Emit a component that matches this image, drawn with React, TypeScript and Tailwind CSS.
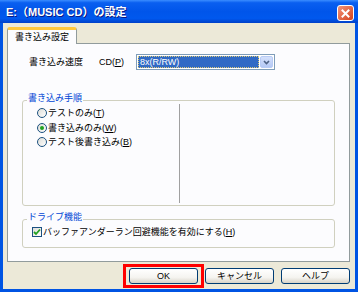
import React from "react";

function Radio({ checked }: { checked?: boolean }) {
  return (
    <div className="w-[10px] h-[10px] shrink-0 rounded-full border border-[#1C5180] bg-[linear-gradient(135deg,#DCDCD7,#FFFFFF)] flex items-center justify-center">
      {checked && <div className="w-[4px] h-[4px] rounded-full bg-[#21A121]" />}
    </div>
  );
}

function Btn({ children }: { children: React.ReactNode }) {
  return (
    <div className="w-[69px] h-[16px] rounded-[3px] border border-[#003C74] bg-[linear-gradient(to_bottom,#FFFFFF_0%,#F5F4F0_60%,#D8D3C8_100%)] flex items-center justify-center text-[9px] leading-[12px]">
      {children}
    </div>
  );
}

export default function App() {
  return (
    <div className="w-[358px] h-[292px] flex flex-col bg-[#0054E3] font-['Liberation_Sans','Noto_Sans_CJK_JP',sans-serif] text-black">
      <div className="h-[23px] shrink-0 flex items-start bg-[linear-gradient(to_bottom,#3A8DFF_0%,#0A5FF0_12%,#0055EA_50%,#0058EE_80%,#0040C8_100%)]">
        <div className="flex-1 pl-[6px] pt-[5px] text-[11px] leading-[14px] font-bold text-white [text-shadow:1px_1px_0_#0A1883]">
          E:（MUSIC CD）の設定
        </div>
        <div className="mt-[5px] mr-[4px] w-[17px] h-[16px] rounded-[3px] border border-white bg-[linear-gradient(135deg,#F2947A,#D5421C)] flex items-center justify-center">
          <svg width="9" height="9" viewBox="0 0 9 9">
            <path d="M1.5 1.5L7.5 7.5M7.5 1.5L1.5 7.5" stroke="white" strokeWidth="2" strokeLinecap="square" />
          </svg>
        </div>
      </div>
      <div className="flex-1 mx-[3px] mb-[3px] bg-[#ECE9D8] flex flex-col pl-[4px] pr-[5px] pt-[4px] pb-[5px]">
        <div className="flex h-[16px] shrink-0">
          <div className="relative z-10 w-[70px] h-[17px] rounded-t-[3px] border-x border-[#919B9C] border-t-[3px] border-t-[#FFC83C] bg-[#FCFCFE] flex items-center justify-center text-[9px] leading-[12px]">
            書き込み設定
          </div>
        </div>
        <div className="flex-1 border border-[#919B9C] bg-[#FCFCFE] flex flex-col px-[14px] text-[9px] leading-[12px]">
          <div className="mt-[10px] h-[16px] flex items-center pl-[7px]">
            <div className="w-[70px]">書き込み速度</div>
            <div className="w-[37px]">
              CD(<span className="underline">P</span>)
            </div>
            <div className="w-[139px] h-[16px] border border-[#7F9DB9] bg-white flex p-[1px] gap-[1px]">
              <div className="flex-1 bg-[#316AC5] border border-dotted border-[#D8C878] text-white pl-[1px] flex items-center">
                8x(R/RW)
              </div>
              <div className="w-[13px] rounded-[2px] border border-[#B8CBF5] bg-[linear-gradient(to_bottom,#D4E0FB,#B4C8F5)] flex items-center justify-center">
                <svg width="7" height="5" viewBox="0 0 7 5">
                  <path d="M1 1L3.5 3.5L6 1" stroke="#4D6185" strokeWidth="1.6" fill="none" />
                </svg>
              </div>
            </div>
          </div>

          <div className="mt-[30px] border border-[#D0D0BF] rounded-[3px] flex flex-col pb-[2px]">
            <div className="-mt-[9px] ml-[4px] px-[1px] w-fit bg-[#FCFCFE] text-[#0046D5]">書き込み手順</div>
            <div className="flex h-[99px] pl-[14px]">
              <div className="w-[142px] pt-[2px] flex flex-col">
                <div className="h-[14.5px] flex items-center gap-[1px]">
                  <Radio />
                  <span>
                    テストのみ(<span className="underline">T</span>)
                  </span>
                </div>
                <div className="h-[14.5px] flex items-center gap-[1px]">
                  <Radio checked />
                  <span>
                    書き込みのみ(<span className="underline">W</span>)
                  </span>
                </div>
                <div className="h-[14.5px] flex items-center gap-[1px]">
                  <Radio />
                  <span>
                    テスト後書き込み(<span className="underline">B</span>)
                  </span>
                </div>
              </div>
              <div className="w-px bg-[#A0A0A0]" />
            </div>
          </div>

          <div className="mt-[13px] border border-[#D0D0BF] rounded-[3px] flex flex-col pb-[8px]">
            <div className="-mt-[9px] ml-[4px] px-[1px] w-fit bg-[#FCFCFE] text-[#0046D5]">ドライブ機能</div>
            <div className="mt-[2px] h-[14px] flex items-center gap-[1px] pl-[9px]">
              <div className="w-[10px] h-[10px] shrink-0 border border-[#1C5180] bg-[linear-gradient(135deg,#DCDCD7,#FFFFFF)] flex items-center justify-center">
                <svg width="8" height="8" viewBox="0 0 8 8">
                  <path d="M1 4L3 6L7 1.5" stroke="#21A121" strokeWidth="1.8" fill="none" />
                </svg>
              </div>
              <span>
                バッファアンダーラン回避機能を有効にする(<span className="underline">H</span>)
              </span>
            </div>
          </div>
        </div>
        <div className="mt-[6px] h-[16px] shrink-0 flex justify-end gap-[7px]">
          <div className="relative">
            <Btn>OK</Btn>
            <div className="absolute -left-[6px] -right-[6px] -top-[4px] -bottom-[4px] border-[3px] border-[#FF0000]" />
          </div>
          <Btn>キャンセル</Btn>
          <Btn>ヘルプ</Btn>
        </div>
      </div>
    </div>
  );
}
